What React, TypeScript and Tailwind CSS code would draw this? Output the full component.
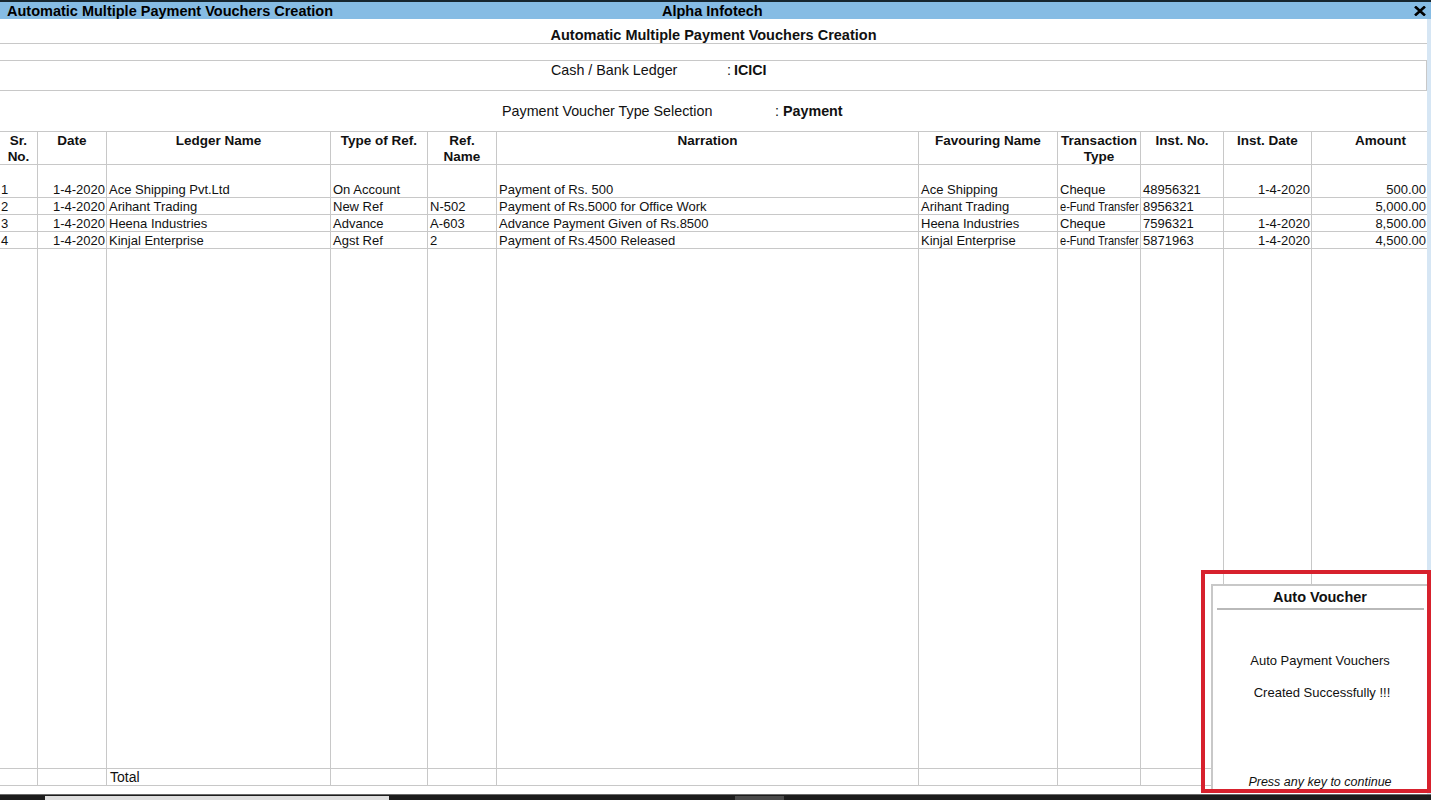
import { Fragment } from "react";

type VoucherRow = {
  sr: string;
  date: string;
  ledger: string;
  refType: string;
  refName: string;
  narration: string;
  favouring: string;
  txType: string;
  instNo: string;
  instDate: string;
  amount: string;
};

const rows: VoucherRow[] = [
  {
    sr: "1",
    date: "1-4-2020",
    ledger: "Ace Shipping Pvt.Ltd",
    refType: "On Account",
    refName: "",
    narration: "Payment of Rs. 500",
    favouring: "Ace Shipping",
    txType: "Cheque",
    instNo: "48956321",
    instDate: "1-4-2020",
    amount: "500.00",
  },
  {
    sr: "2",
    date: "1-4-2020",
    ledger: "Arihant Trading",
    refType: "New Ref",
    refName: "N-502",
    narration: "Payment of Rs.5000 for Office Work",
    favouring: "Arihant Trading",
    txType: "e-Fund Transfer",
    instNo: "8956321",
    instDate: "",
    amount: "5,000.00",
  },
  {
    sr: "3",
    date: "1-4-2020",
    ledger: "Heena Industries",
    refType: "Advance",
    refName: "A-603",
    narration: "Advance Payment Given of Rs.8500",
    favouring: "Heena Industries",
    txType: "Cheque",
    instNo: "7596321",
    instDate: "1-4-2020",
    amount: "8,500.00",
  },
  {
    sr: "4",
    date: "1-4-2020",
    ledger: "Kinjal Enterprise",
    refType: "Agst Ref",
    refName: "2",
    narration: "Payment of Rs.4500 Released",
    favouring: "Kinjal Enterprise",
    txType: "e-Fund Transfer",
    instNo: "5871963",
    instDate: "1-4-2020",
    amount: "4,500.00",
  },
];

// shared column widths for header, body and total rows
const cols =
  "grid grid-cols-[37px_69px_224px_97px_69px_422px_139px_83px_83px_88px_116px]";
const cell = "border-l border-[#c8c8c8] whitespace-nowrap overflow-visible";

const headers: string[][] = [
  ["Sr.", "No."],
  ["Date"],
  ["Ledger Name"],
  ["Type of Ref."],
  ["Ref.", "Name"],
  ["Narration"],
  ["Favouring Name"],
  ["Transaction", "Type"],
  ["Inst. No."],
  ["Inst. Date"],
  ["Amount"],
];

const EmptyCells = () => (
  <>
    <div />
    {Array.from({ length: 10 }).map((_, i) => (
      <div key={i} className={cell} />
    ))}
  </>
);

const CloseIcon = () => (
  <svg width="12" height="10" viewBox="0 0 12 10" className="block">
    <path d="M1 0.5 L11 9.5 M11 0.5 L1 9.5" stroke="#000" strokeWidth="2.6" />
  </svg>
);

const AutoVoucherPopup = () => (
  <>
    <div className="absolute left-[1211px] top-[584px] w-[216px] h-[208px] bg-white border-l-2 border-t-2 border-[#c8c8c8] flex flex-col text-[#111]">
      <div className="pt-[3px] text-center text-[14.5px] font-bold leading-4">
        Auto Voucher
      </div>
      <div className="mt-[3px] ml-[4px] mr-[3px] h-[2px] bg-[#b9b9b9]" />
      <div className="mt-[43px] text-center text-[13px] leading-4">
        Auto Payment Vouchers
      </div>
      <div className="mt-[16px] pl-[4px] text-center text-[13px] leading-4">
        Created Successfully !!!
      </div>
      <div className="mt-auto pb-[2px] text-center text-[12.5px] italic leading-4">
        Press any key to continue
      </div>
    </div>
    {/* highlight frame around the message */}
    <div className="absolute left-[1201px] top-[570px] w-[230px] h-[223px] border-4 border-[#d7212d] pointer-events-none" />
  </>
);

export default function App() {
  return (
    <div className="relative w-[1431px] h-[800px] overflow-hidden bg-white flex flex-col font-['Liberation_Sans',Arial,sans-serif] text-[#111]">
      {/* window title bar */}
      <div className="h-[2px] bg-[#17262f]" />
      <div className="h-[17px] bg-[#86bce4] grid grid-cols-[655px_auto_1fr] items-center pl-[7px] pr-[5px] text-[14.5px] font-bold leading-4 text-black">
        <span>Automatic Multiple Payment Vouchers Creation</span>
        <span>Alpha Infotech</span>
        <span className="flex justify-end">
          <CloseIcon />
        </span>
      </div>

      <div className="flex flex-1 min-h-0">
        <div className="w-[1427px] flex flex-col">
          {/* report heading */}
          <div className="h-[25px] border-b border-[#c8c8c8] pt-[8px] text-center text-[14.5px] font-bold leading-4">
            Automatic Multiple Payment Vouchers Creation
          </div>
          <div className="h-[17px] border-b border-[#c8c8c8]" />
          <div className="h-[30px] border-b border-r border-[#c8c8c8] pt-[1px] pl-[551px] flex text-[14.3px] leading-4">
            <span className="w-[176px]">Cash / Bank Ledger</span>
            <span className="w-[7px]">:</span>
            <span className="font-bold">ICICI</span>
          </div>
          <div className="h-[41px] border-b border-[#c8c8c8] pt-[12px] pl-[502px] flex text-[14.3px] leading-4">
            <span className="w-[273px]">Payment Voucher Type Selection</span>
            <span className="w-[8px]">:</span>
            <span className="font-bold">Payment</span>
          </div>

          {/* column headings */}
          <div className={`${cols} grid-rows-[32px] h-[33px] border-b border-[#c8c8c8] text-[13.5px] font-bold leading-4`}>
            {headers.map((lines, i) => (
              <div
                key={i}
                className={`${i === 0 ? "whitespace-nowrap" : cell} pt-[1px] text-center ${
                  i === 10 ? "pl-[22px]" : ""
                }`}
              >
                {lines.map((l) => (
                  <div key={l}>{l}</div>
                ))}
              </div>
            ))}
          </div>

          {/* voucher lines */}
          <div className={`${cols} h-[16px]`}>
            <EmptyCells />
          </div>
          {rows.map((r) => (
            <div
              key={r.sr}
              className={`${cols} grid-rows-[16px] h-[17px] border-b border-[#c8c8c8] text-[13px] leading-[18px]`}
            >
              <div className="pl-[1px]">{r.sr}</div>
              <div className={`${cell} text-right pr-[1px]`}>{r.date}</div>
              <div className={`${cell} pl-[2px]`}>{r.ledger}</div>
              <div className={`${cell} pl-[2px]`}>{r.refType}</div>
              <div className={`${cell} pl-[2px]`}>{r.refName}</div>
              <div className={`${cell} pl-[2px]`}>{r.narration}</div>
              <div className={`${cell} pl-[2px]`}>{r.favouring}</div>
              <div className={`${cell} pl-[2px]`}>
                {r.txType === "e-Fund Transfer" ? (
                  <span className="inline-block origin-left scale-x-[0.85]">
                    {r.txType}
                  </span>
                ) : (
                  r.txType
                )}
              </div>
              <div className={`${cell} pl-[2px]`}>{r.instNo}</div>
              <div className={`${cell} text-right pr-[1px]`}>{r.instDate}</div>
              <div className={`${cell} text-right pr-[1px]`}>{r.amount}</div>
            </div>
          ))}
          <div className={`${cols} flex-1 border-b border-[#c8c8c8]`}>
            <EmptyCells />
          </div>

          {/* total line */}
          <div className={`${cols} h-[17px] border-b border-[#c8c8c8] text-[14px] leading-4`}>
            {headers.map((_, i) => (
              <Fragment key={i}>
                {i === 0 ? (
                  <div />
                ) : (
                  <div className={`${cell} ${i === 2 ? "pl-[3px]" : ""}`}>
                    {i === 2 ? "Total" : ""}
                  </div>
                )}
              </Fragment>
            ))}
          </div>
          <div className="h-[8px]" />
        </div>
        <div className="w-[4px] bg-[#d6e6f4]" />
      </div>

      {/* bottom bar */}
      <div className="h-[1px] bg-[#6a6a6a]" />
      <div className="h-[5px] bg-[#1c1c1c] flex items-end">
        <div className="ml-[45px] w-[344px] h-[4px] bg-[#dedede]" />
        <div className="ml-[346px] w-[49px] h-[4px] bg-[#4a4a4a]" />
      </div>

      <AutoVoucherPopup />
    </div>
  );
}
